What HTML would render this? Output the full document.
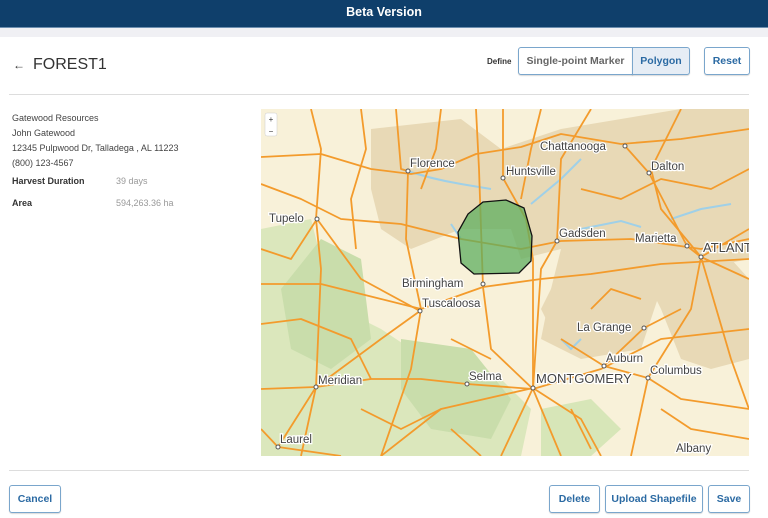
<!DOCTYPE html>
<html><head><meta charset="utf-8"><style>
*{box-sizing:border-box;margin:0;padding:0}
body{width:768px;height:518px;background:#fff;font-family:"Liberation Sans",sans-serif;position:relative;overflow:hidden;color:#333}
.hdr{position:absolute;left:0;top:0;width:768px;height:28px;background:#0f3f6b;color:#fff;font-weight:bold;font-size:12.5px;text-align:center;line-height:25px;border-bottom:1px solid #6d8fb0}
.strip{position:absolute;left:0;top:28px;width:768px;height:9px;background:#f0f0f4}
.title{position:absolute;left:13px;top:56px;font-size:16px;color:#333}
.btn{position:absolute;border:1px solid #7aa6cc;border-radius:3px;background:#fff;color:#2b6aa3;font-weight:bold;font-size:10.5px;text-align:center;box-shadow:0 1px 1px rgba(0,0,0,.15)}
.hr{position:absolute;left:9px;width:740px;height:1px;background:#ddd}
.info{position:absolute;left:12px;font-size:9px;color:#444}
.lab{font-weight:bold;color:#333}
.val{position:absolute;left:116px;color:#999;font-size:9px}
</style></head><body>
<div class="hdr">Beta Version</div>
<div class="strip"></div>
<div class="title"><span style="font-size:12px;margin-right:8px">&#8592;</span>FOREST1</div>
<div style="position:absolute;left:487px;top:57px;font-size:8px;font-weight:bold;color:#333">Define</div>
<div class="btn" style="left:518px;top:47px;width:115px;height:28px;line-height:26px;color:#666;border-radius:3px 0 0 3px">Single-point Marker</div>
<div class="btn" style="left:632px;top:47px;width:58px;height:28px;line-height:26px;background:#e6edf5;border-radius:0 3px 3px 0">Polygon</div>
<div class="btn" style="left:704px;top:47px;width:46px;height:28px;line-height:26px">Reset</div>
<div class="hr" style="top:94px"></div>
<div class="info" style="top:113px">Gatewood Resources</div>
<div class="info" style="top:128px">John Gatewood</div>
<div class="info" style="top:143px">12345 Pulpwood Dr, Talladega , AL 11223</div>
<div class="info" style="top:158px">(800) 123-4567</div>
<div class="info lab" style="top:176px;width:200px">Harvest Duration<span class="val" style="font-weight:normal;left:104px">39 days</span></div>
<div class="info lab" style="top:198px;width:200px">Area<span class="val" style="font-weight:normal;left:104px">594,263.36 ha</span></div>
<svg style="position:absolute;left:261px;top:109px" width="488" height="347" viewBox="0 0 488 347">
<rect width="488" height="347" fill="#f8f1d9"/>
<g fill="#e8d9b6">
<path d="M110 20 L200 10 L240 40 L300 20 L360 10 L420 0 L488 0 L488 150 L440 160 L400 180 L380 240 L320 250 L280 230 L290 180 L300 140 L260 150 L250 120 L200 120 L150 140 L120 120 L110 80 Z"/>
<path d="M290 180 L360 165 L380 200 L370 240 L320 245 L285 220 Z"/>
<path d="M380 160 L470 150 L488 170 L488 250 L450 260 L420 250 L400 200 Z"/>
<path d="M300 160 L280 200 L290 220 L330 200 Z"/>
</g>
<g fill="#d7e6b8">
<path d="M0 120 L50 110 L60 150 L80 200 L120 220 L150 240 L200 260 L240 270 L270 300 L260 347 L0 347 Z" opacity=".9"/>
<path d="M60 130 L100 150 L110 230 L70 260 L30 240 L20 180 Z" fill="#c9ddab"/>
<path d="M140 230 L210 240 L250 290 L230 330 L170 320 L140 280 Z" fill="#c9ddab"/>
<path d="M280 300 L330 290 L360 320 L330 347 L280 347 Z" fill="#d7e6b8"/>
</g>
<g fill="none" stroke="#9fd0e8" stroke-width="2">
<path d="M140 60 Q170 70 200 75 L230 80"/>
<path d="M270 95 L300 70 L320 50"/>
<path d="M320 120 L360 112 L380 118"/>
<path d="M190 115 L200 130"/>
<path d="M410 110 L440 100 L470 95"/>
<path d="M300 230 L310 240 L320 230"/>
</g>
<g fill="none" stroke="#f39b2c" stroke-width="1.8" stroke-linejoin="round">
<path d="M0 48 L60 45 L110 60 L150 65 L180 60 L215 45 L260 38 L300 25 L360 35 L420 30 L488 20"/>
<path d="M0 75 L40 90 L80 110 L140 115 L200 130 L260 140 L300 132 L370 130 L440 140 L488 130"/>
<path d="M0 175 L60 175 L120 190 L160 200 L222 178 L280 170 L330 165 L400 155 L488 150"/>
<path d="M0 280 L55 278 L110 270 L160 270 L206 275 L272 280 L340 260 L400 230 L488 220"/>
<path d="M50 0 L60 40 L55 110 L60 160 L55 278 L40 347"/>
<path d="M135 0 L140 60 L147 62 L145 130 L160 200 L150 260 L120 347"/>
<path d="M215 0 L218 60 L222 178 L230 240 L272 280 L300 347"/>
<path d="M242 0 L242 69 L265 110 L272 150 L272 279"/>
<path d="M330 0 L300 50 L296 132 L280 160 L272 280"/>
<path d="M420 0 L390 60 L400 100 L440 148 L430 200 L387 269 L370 347"/>
<path d="M440 148 L488 120 M440 148 L488 170 M440 148 L470 250 L488 300"/>
<path d="M364 37 L388 64 L426 137 L440 148"/>
<path d="M272 279 L320 310 L340 347 M272 279 L240 347 M272 279 L180 300 L120 347"/>
<path d="M159 202 L120 230 L55 278 M159 202 L100 170 L56 110"/>
<path d="M343 257 L387 269 L420 290 L488 300"/>
<path d="M300 230 L343 257 L383 219 L420 200"/>
<path d="M17 338 L55 278 M0 320 L17 338 L80 347"/>
<path d="M0 215 L40 210 L90 230 L110 270 M100 0 L105 40 L90 90 L95 140 M180 0 L175 40 L160 80 M280 0 L270 40 L260 90"/>
<path d="M0 140 L30 150 L56 110 M320 80 L360 90 L400 70 L450 80 L488 60 M330 200 L350 180 L380 190 M400 300 L430 320 L488 330 M190 230 L230 250 M100 300 L140 320 L180 300 M190 320 L220 347 M310 300 L330 340"/>
</g>
<path d="M222 93 L245 91 L263 99 L271 127 L270 152 L258 164 L213 165 L200 154 L197 123 L207 105 Z" fill="#5fad5f" fill-opacity=".75" stroke="#111" stroke-width="1.3"/>
<g font-size="11.5" fill="#444" stroke="#fff" stroke-width="2.5" paint-order="stroke" font-family="Liberation Sans,sans-serif">
<text x="279" y="41">Chattanooga</text>
<text x="149" y="58">Florence</text>
<text x="245" y="66">Huntsville</text>
<text x="390" y="61">Dalton</text>
<text x="8" y="113">Tupelo</text>
<text x="298" y="128">Gadsden</text>
<text x="374" y="133">Marietta</text>
<text x="442" y="143" font-size="13">ATLANTA</text>
<text x="141" y="178">Birmingham</text>
<text x="161" y="198">Tuscaloosa</text>
<text x="316" y="222">La Grange</text>
<text x="345" y="253">Auburn</text>
<text x="389" y="265">Columbus</text>
<text x="275" y="274" font-size="13">MONTGOMERY</text>
<text x="208" y="271">Selma</text>
<text x="57" y="275">Meridian</text>
<text x="19" y="334">Laurel</text>
<text x="415" y="343">Albany</text>
</g>
<g fill="#fff" stroke="#555" stroke-width="1">
<circle cx="364" cy="37" r="2"/><circle cx="147" cy="62" r="2"/><circle cx="242" cy="69" r="2"/><circle cx="388" cy="64" r="2"/><circle cx="56" cy="110" r="2"/><circle cx="296" cy="132" r="2"/><circle cx="426" cy="137" r="2"/><circle cx="440" cy="148" r="2"/><circle cx="222" cy="175" r="2"/><circle cx="159" cy="202" r="2"/><circle cx="383" cy="219" r="2"/><circle cx="343" cy="257" r="2"/><circle cx="387" cy="269" r="2"/><circle cx="272" cy="279" r="2"/><circle cx="206" cy="275" r="2"/><circle cx="55" cy="278" r="2"/><circle cx="17" cy="338" r="2"/>
</g>
<rect x="4" y="4" width="12" height="23" fill="#fff" stroke="#ccc" stroke-width=".5" rx="2"/>
<text x="10" y="13" font-size="8" text-anchor="middle" fill="#333">+</text>
<text x="10" y="25" font-size="8" text-anchor="middle" fill="#333">−</text>
</svg>
<div class="hr" style="top:470px"></div>
<div class="btn" style="left:9px;top:485px;width:52px;height:28px;line-height:26px">Cancel</div>
<div class="btn" style="left:549px;top:485px;width:51px;height:28px;line-height:26px">Delete</div>
<div class="btn" style="left:605px;top:485px;width:98px;height:28px;line-height:26px">Upload Shapefile</div>
<div class="btn" style="left:708px;top:485px;width:42px;height:28px;line-height:26px">Save</div>
</body></html>
